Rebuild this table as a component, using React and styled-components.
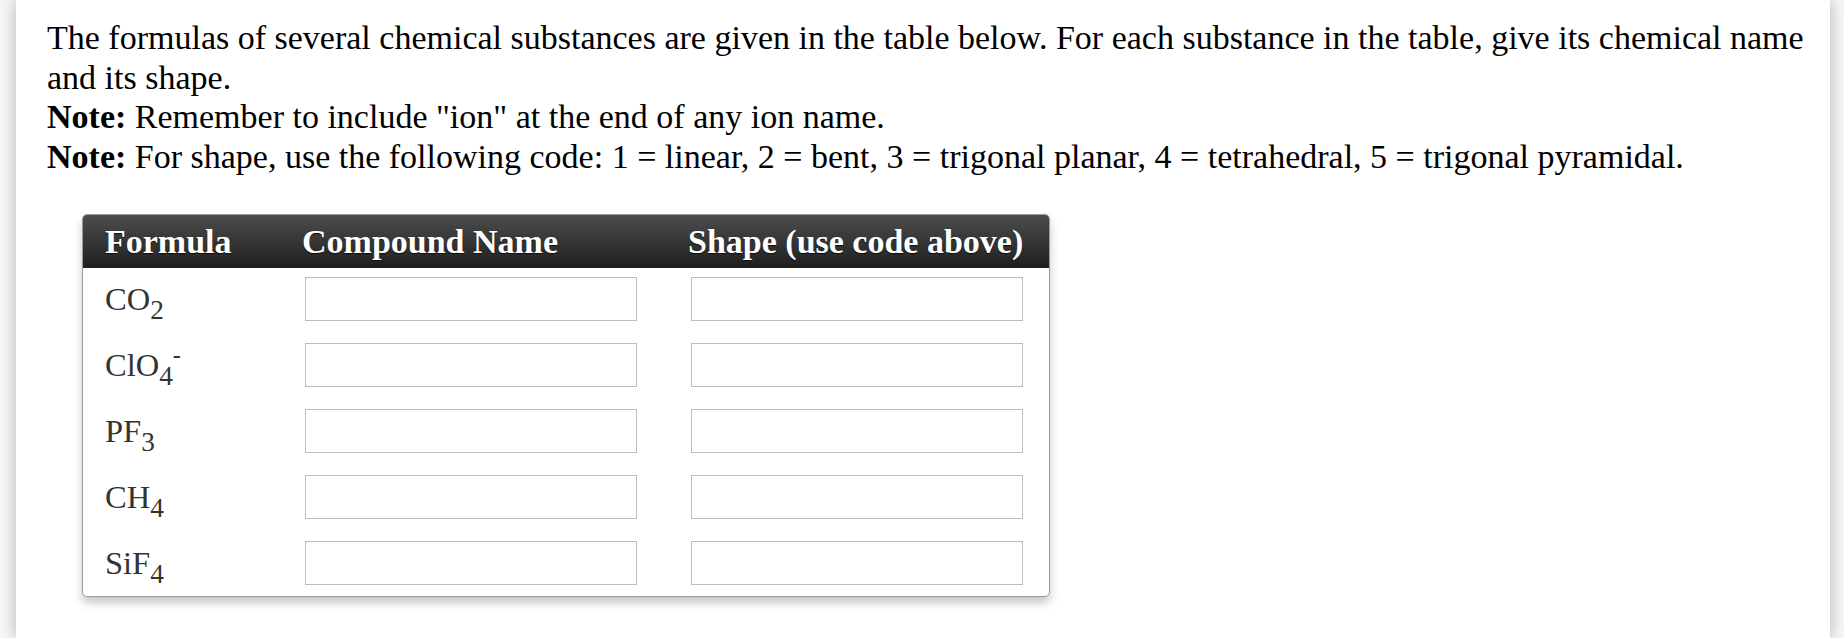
import React from "react";
import styled, { createGlobalStyle } from "styled-components";

const Global = createGlobalStyle`
  html, body {
    margin: 0;
    padding: 0;
    background: #f7f7f7;
  }
  body {
    font-family: "Liberation Serif", "Times New Roman", serif;
  }
`;

const Page = styled.div`
  box-sizing: border-box;
  margin: 0 14px 0 16px;
  min-height: 638px;
  background: #fff;
  box-shadow: 0 0 16px rgba(0, 0, 0, 0.28);
  padding: 18px 6px 20px 31px;
`;

const Prompt = styled.div`
  font-size: 34px;
  line-height: 39.6px;
  color: #000;
`;

const Para = styled.p`
  margin: 0;
`;

const Bold = styled.b`
  font-weight: 700;
`;

const Card = styled.div`
  margin: 38px 0 0 35px;
  width: 968px;
  box-sizing: border-box;
  border: 1px solid #9c9c9c;
  border-radius: 5px;
  overflow: hidden;
  background: #fff;
  box-shadow: 0 6px 10px rgba(0, 0, 0, 0.22);
`;

const cols = "219px 386px 1fr";

const Head = styled.div`
  display: grid;
  grid-template-columns: ${cols};
  align-items: center;
  height: 53px;
  background: linear-gradient(#4b4c4d, #1f1f1f);
`;

const HeadCell = styled.div`
  padding-left: ${(p) => p.$pad || 0}px;
  font-size: 34px;
  font-weight: 700;
  color: #fff;
  text-shadow: 0 1px 1px rgba(0, 0, 0, 0.7);
  white-space: nowrap;
`;

const Body = styled.div`
  display: grid;
  grid-template-columns: ${cols};
  row-gap: 22px;
  align-items: center;
  padding: 9px 0 11px;
`;

const Formula = styled.div`
  padding-left: 22px;
  font-size: 32.5px;
  color: #333;
  line-height: 44px;
  white-space: nowrap;
`;

const Sub = styled.sub`
  font-size: 0.84em;
  vertical-align: -0.34em;
  line-height: 0;
`;

const Sup = styled.sup`
  font-size: 0.75em;
  vertical-align: 0.55em;
  line-height: 0;
`;

const Field = styled.input`
  box-sizing: border-box;
  display: block;
  margin-left: 3px;
  width: 332px;
  height: 44px;
  border: 1px solid #bdbdbd;
  background: #fff;
  padding: 0 8px;
  font-family: inherit;
  font-size: 24px;
  outline: none;
`;

const rows = [
  { base: ["CO", "2"] },
  { base: ["ClO", "4"], charge: "-" },
  { base: ["PF", "3"] },
  { base: ["CH", "4"] },
  { base: ["SiF", "4"] },
];

export default function App() {
  return (
    <>
      <Global />
      <Page>
        <Prompt>
          <Para>
            The formulas of several chemical substances are given in the table below. For each
            substance in the table, give its chemical name and its shape.
          </Para>
          <Para>
            <Bold>Note:</Bold> Remember to include "ion" at the end of any ion name.
          </Para>
          <Para>
            <Bold>Note:</Bold> For shape, use the following code: 1 = linear, 2 = bent, 3 =
            trigonal planar, 4 = tetrahedral, 5 = trigonal pyramidal.
          </Para>
        </Prompt>
        <Card>
          <Head>
            <HeadCell $pad={22}>Formula</HeadCell>
            <HeadCell>Compound Name</HeadCell>
            <HeadCell>Shape (use code above)</HeadCell>
          </Head>
          <Body>
            {rows.map((r, i) => (
              <React.Fragment key={i}>
                <Formula>
                  {r.base[0]}
                  <Sub>{r.base[1]}</Sub>
                  {r.charge && <Sup>{r.charge}</Sup>}
                </Formula>
                <Field type="text" aria-label="Compound Name" />
                <Field type="text" aria-label="Shape" />
              </React.Fragment>
            ))}
          </Body>
        </Card>
      </Page>
    </>
  );
}
